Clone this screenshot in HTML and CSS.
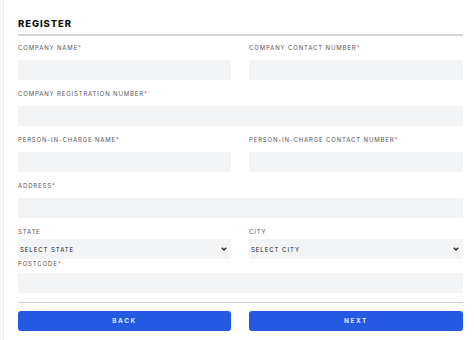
FILE: index.html
```html
<!DOCTYPE html>
<html lang="en">
<head>
    <meta charset="UTF-8">
    <meta name="viewport" content="width=device-width, initial-scale=1.0">
    <title>Register</title>
    <link rel="stylesheet" href="styles.css">
</head>
<body>
    <div class="card">
        <h1 class="title">REGISTER</h1>
        <div class="divider thick"></div>

        <div class="row two">
            <div class="field">
                <label>COMPANY NAME<span class="req">*</span></label>
                <input type="text">
            </div>
            <div class="field">
                <label>COMPANY CONTACT NUMBER<span class="req">*</span></label>
                <input type="text">
            </div>
        </div>

        <div class="row">
            <div class="field">
                <label>COMPANY REGISTRATION NUMBER<span class="req">*</span></label>
                <input type="text">
            </div>
        </div>

        <div class="row two">
            <div class="field">
                <label>PERSON-IN-CHARGE NAME<span class="req">*</span></label>
                <input type="text">
            </div>
            <div class="field">
                <label>PERSON-IN-CHARGE CONTACT NUMBER<span class="req">*</span></label>
                <input type="text">
            </div>
        </div>

        <div class="row">
            <div class="field">
                <label>ADDRESS<span class="req">*</span></label>
                <input type="text">
            </div>
        </div>

        <div class="row two tight">
            <div class="field">
                <label>STATE</label>
                <div class="select-wrap">
                    <select>
                        <option>SELECT STATE</option>
                    </select>
                    <svg class="chev" width="6" height="4" viewBox="0 0 6 4"><path d="M0.8 0.8 L3 3 L5.2 0.8" fill="none" stroke="#222" stroke-width="1.4"/></svg>
                </div>
            </div>
            <div class="field">
                <label>CITY</label>
                <div class="select-wrap">
                    <select>
                        <option>SELECT CITY</option>
                    </select>
                    <svg class="chev" width="6" height="4" viewBox="0 0 6 4"><path d="M0.8 0.8 L3 3 L5.2 0.8" fill="none" stroke="#222" stroke-width="1.4"/></svg>
                </div>
            </div>
        </div>

        <div class="row last">
            <div class="field">
                <label class="close">POSTCODE<span class="req">*</span></label>
                <input type="text">
            </div>
        </div>

        <div class="divider"></div>

        <div class="buttons">
            <button class="btn">BACK</button>
            <button class="btn">NEXT</button>
        </div>
    </div>
</body>
</html>
```

FILE: styles.css
```css
* {
    margin: 0;
    padding: 0;
    box-sizing: border-box;
}

body {
    font-family: Inter, "Liberation Sans", Arial, sans-serif;
    background-color: #fafafa;
    overflow: hidden;
    height: 340px;
}

.card {
    background: #fff;
    margin-left: 3px;
    border-left: 1px solid #ececec;
    width: 473px;
    height: 340px;
    padding: 17px 14px 0 14px;
}

.card > * {
    width: 445px;
}

.title {
    font-size: 9.5px;
    line-height: 14px;
    font-weight: 800;
    letter-spacing: 0.9px;
    color: #111;
    margin-bottom: 3px;
}

.divider {
    height: 1px;
    background: #cfcfcf;
    margin-bottom: 8px;
}

.divider.thick {
    height: 2px;
    background: #d6d6d6;
    margin-bottom: 7px;
}

.row {
    display: grid;
    grid-template-columns: 1fr;
    margin-bottom: 9px;
}

.row.two {
    grid-template-columns: 213px 214px;
    column-gap: 18px;
}

.row.tight {
    margin-bottom: 0;
}

.row.last {
    margin-bottom: 9px;
}

.field label {
    display: block;
    font-size: 6px;
    line-height: 10px;
    letter-spacing: 0.85px;
    color: #555;
    margin-bottom: 7px;
}

.row.tight .field label {
    margin-bottom: 2px;
}

.field label.close {
    margin-bottom: 4px;
}

.req {
    color: #e0524f;
}

.field input,
.field select {
    display: block;
    width: 100%;
    height: 20px;
    border: none;
    background: #f3f4f6;
    outline: none;
    font-family: inherit;
}

.select-wrap {
    position: relative;
}

.field select {
    appearance: none;
    -webkit-appearance: none;
    font-size: 6px;
    letter-spacing: 0.95px;
    color: #222;
    padding-left: 2px;
}

.chev {
    position: absolute;
    right: 4px;
    top: 8px;
    pointer-events: none;
}

.buttons {
    display: grid;
    grid-template-columns: 213px 214px;
    column-gap: 18px;
}

.btn {
    height: 20px;
    border: none;
    border-radius: 3px;
    background: #2459e2;
    color: #dfe7ff;
    font-family: inherit;
    font-size: 6.5px;
    font-weight: 700;
    letter-spacing: 1.5px;
}
```
